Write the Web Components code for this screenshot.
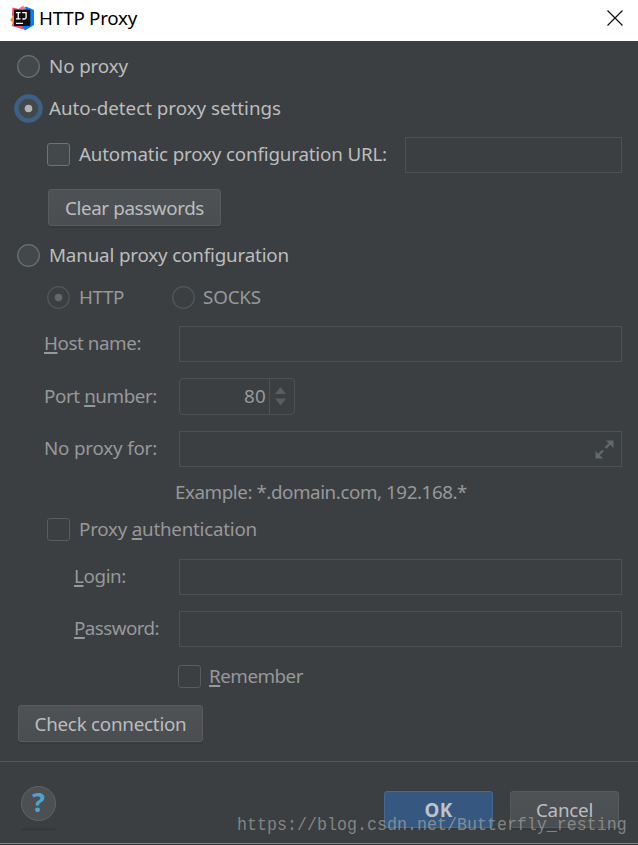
<!DOCTYPE html>
<html lang="en">
<head>
<meta charset="utf-8">
<title>HTTP Proxy</title>
<style>
html,body{margin:0;padding:0;width:638px;height:845px;overflow:hidden;background:#3c3f41}
</style>
</head>
<body>
<proxy-dialog></proxy-dialog>
<script>
function define(name, html, ready) {
  const tpl = document.createElement('template');
  tpl.innerHTML = html;
  customElements.define(name, class extends HTMLElement {
    connectedCallback() {
      if (this.shadowRoot) return;
      this.attachShadow({ mode: 'open' }).appendChild(tpl.content.cloneNode(true));
      if (ready) ready.call(this, this.shadowRoot);
    }
  });
}

/* Text label; "w" is its advance width, reached by tracking. */
define('ui-label', `<style>
:host{display:block;flex:none;white-space:pre;line-height:26px;height:26px}
:host([up]){margin-bottom:2px}
span{display:inline-block}
::slotted(u){text-decoration:underline;text-decoration-thickness:1.5px;text-underline-offset:2px;text-decoration-skip-ink:none}
</style><span><slot></slot></span>`, function (root) {
  const w = parseFloat(this.getAttribute('w'));
  if (!w) return;
  const s = root.querySelector('span');
  const n = this.textContent.length;
  s.style.letterSpacing = ((w - s.getBoundingClientRect().width) / n) + 'px';
  this.style.width = w + 'px';
});

define('ui-row', `<style>
:host{display:flex;align-items:center;box-sizing:border-box;flex:none}
:host([dim]){color:#979899}
</style><slot></slot>`, function () {
  this.style.height = this.getAttribute('h') + 'px';
  this.style.paddingLeft = (this.getAttribute('indent') || 0) + 'px';
});

define('ui-radio', `<style>
:host{display:block;flex:none;width:29px;height:29px;--edge:#6d6f70;--fill:#43494a;--dot:#b0b2b3}
:host([disabled]){--edge:#545657;--fill:#3c3f41;--dot:#656667}
svg{display:block}
.ring,.dot{display:none}
:host([focused]) .ring,:host([checked]) .dot{display:block}
:host([focused]) .edge{stroke:#3e6185}
</style><svg width="29" height="29" viewBox="0 0 29 29">
<circle class="edge" cx="14.5" cy="14.5" r="10.8" fill="var(--fill)" stroke="var(--edge)" stroke-width="1.3"/>
<circle class="ring" cx="14.5" cy="14.5" r="12.1" fill="none" stroke="#3d6185" stroke-width="4.4"/>
<circle class="dot" cx="14.5" cy="14.5" r="3.8" fill="var(--dot)"/></svg>`);

define('ui-check', `<style>
:host{display:block;flex:none;box-sizing:border-box;width:23px;height:23px;border:1px solid #707273;border-radius:3px;background:#43494a}
:host([disabled]){border-color:#5a5b5c;background:#3c3f41}
:host([up]){margin-bottom:2px}
</style>`);

define('ui-field', `<style>
:host{display:flex;flex:none;align-items:center;justify-content:flex-end;box-sizing:border-box;height:36px;border:1px solid #4f5151;padding-right:7px}
</style><slot></slot>`, function () { this.style.width = this.getAttribute('w') + 'px'; });

define('ui-spinner', `<style>
:host{display:flex;flex:none;box-sizing:border-box;width:116px;height:37px;border:1px solid #505152;border-radius:4px}
.value{flex:1;display:flex;align-items:center;justify-content:flex-end;padding-right:3px}
.arrows{width:25px;border-left:1px solid #505152;display:flex;align-items:center;padding-left:5px;box-sizing:border-box}
</style><div class="value"><slot></slot></div><div class="arrows"><svg width="11" height="20" viewBox="0 0 11 20"><path d="M0 8 5.5 1 11 8ZM0 12.5H11L5.5 19.5Z" fill="#5b5c5d"/></svg></div>`);

define('ui-button', `<style>
:host{display:flex;flex:none;align-items:center;justify-content:center;box-sizing:border-box;height:37px;border:1px solid #585b5c;border-radius:3px;background:linear-gradient(#4e5254,#4a4e50);box-shadow:0 2px 0 #37393b;color:#bbbdbe}
:host([primary]){background:#365880;border-color:#43698f;font-weight:700;color:#bfc3c8}
</style><slot></slot>`, function () { this.style.width = this.getAttribute('w') + 'px'; });

define('ui-help', `<style>
:host{display:block;flex:none;width:36px;height:46px}
.disc{box-sizing:border-box;width:35px;height:35px;border:1px solid #616365;border-radius:50%;background:#4c5052;display:flex;align-items:center;justify-content:center;font:700 27px/30px "Noto Sans",sans-serif;color:#4fa3ce}
.disc span{display:block;height:33px}
.shade{margin:7px 1px 0;height:3px;border-radius:2px;background:#37393b}
</style><div class="disc"><span>?</span></div><div class="shade"></div>`);

define('idea-logo', `<style>:host{display:block;flex:none;width:24px;height:25px;margin-top:1px}svg{display:block}</style>
<svg width="24" height="25" viewBox="0 0 24 25">
<path d="M2.5 1.5 9 3 13 0 14 12 5 16 2 9Z" fill="#f5456f"/>
<path d="M0 14 4 9 9 20 2 16Z" fill="#ff8d21"/>
<path d="M1.5 20 3 16 13 18 16 24 12 23Z" fill="#f64b78"/>
<path d="M13 3 16 .5 24 4V19L15 24.5 12 20Z" fill="#087cfa"/>
<path d="M9 2.5 13 0 16 2.5 12 6Z" fill="#e9739c"/>
<rect x="4" y="3.7" width="16.3" height="16.3" fill="#111"/>
<path d="M6 6.7h4.5M8.25 6.7v6.2M6 12.9h4.5M12.2 6.7h3.9v4.8q0 1.5-1.7 1.5h-2M6 17.3h7" fill="none" stroke="#fff" stroke-width="1.3"/>
</svg>`);

define('title-bar', `<style>
:host{display:flex;flex:none;box-sizing:border-box;height:41px;background:#fff;color:#000;padding:5px 15px 0 10px;align-items:flex-start}
ui-label{margin:0 0 0 5px}
.close{margin:5px 0 0 auto;display:block}
</style><idea-logo></idea-logo><ui-label w="98">HTTP Proxy</ui-label>
<svg class="close" width="16" height="16" viewBox="0 0 16 16"><path d="M.5.5 15.5 15.5M15.5.5.5 15.5" stroke="#111" stroke-width="1.2"/></svg>`);

define('water-mark', `<style>
:host{position:absolute;left:237px;top:813px;white-space:pre;font:16.66px/24px "Liberation Mono",monospace;color:rgba(166,168,164,.68);transform:scaleY(1.15)}
</style><slot></slot>`);

define('proxy-dialog', `<style>
:host{display:flex;flex-direction:column;position:relative;box-sizing:border-box;width:638px;height:845px;background:#3c3f41;color:#bbbdbe;font:18.8px/26px "Noto Sans","Open Sans",sans-serif}
ui-radio + ui-label{margin-left:6px}
ui-check + ui-label{margin-left:9px}
.socks{margin-left:45px}
.socks + ui-label{margin-left:5px}
.url{margin-left:18px}
.name{width:135px}
.sub{width:105px}
footer{flex:none;box-sizing:border-box;margin-top:7px;height:84px;border-top:1px solid #545657;border-bottom:1px solid #303234;display:flex;padding:24px 19px 0 21px;position:relative}
.ok{margin:5px 17px 0 auto}
.cancel{margin-top:5px}
.edge{position:absolute;left:0;right:0;bottom:0;height:1px;background:#858687}
</style>
<title-bar></title-bar>
<ui-row h="50" indent="14"><ui-radio></ui-radio><ui-label w="79">No proxy</ui-label></ui-row>
<ui-row h="34" indent="14"><ui-radio checked focused></ui-radio><ui-label w="232">Auto-detect proxy settings</ui-label></ui-row>
<ui-row h="60" indent="47"><ui-check up></ui-check><ui-label up w="308">Automatic proxy configuration URL:</ui-label><ui-field class="url" w="217"></ui-field></ui-row>
<ui-row h="45" indent="48"><ui-button w="173"><ui-label w="139">Clear passwords</ui-label></ui-button></ui-row>
<ui-row h="50" indent="14"><ui-radio></ui-radio><ui-label w="240">Manual proxy configuration</ui-label></ui-row>
<ui-row h="34" indent="44" dim><ui-radio checked disabled></ui-radio><ui-label w="45">HTTP</ui-label><ui-radio class="socks" disabled></ui-radio><ui-label w="58">SOCKS</ui-label></ui-row>
<ui-row h="60" indent="44" dim><div class="name"><ui-label up w="97"><u>H</u>ost name:</ui-label></div><ui-field w="443"></ui-field></ui-row>
<ui-row h="44" indent="44" dim><div class="name"><ui-label w="113">Port <u>n</u>umber:</ui-label></div><ui-spinner><ui-label w="22">80</ui-label></ui-spinner></ui-row>
<ui-row h="62" indent="44" dim><div class="name"><ui-label up w="113">No proxy for:</ui-label></div><ui-field w="443"><svg width="19" height="19" viewBox="0 0 19 19"><path d="M11 .5h7.5V8ZM.5 11v7.5H8Z" fill="#62696b"/><path d="M10.5 8 15 3.5M8 10.5 3.5 15" stroke="#62696b" stroke-width="2.3"/></svg></ui-field></ui-row>
<ui-row h="24" indent="175" dim><ui-label w="292">Example: *.domain.com, 192.168.*</ui-label></ui-row>
<ui-row h="50" indent="47" dim><ui-check disabled></ui-check><ui-label w="178">Proxy <u>a</u>uthentication</ui-label></ui-row>
<ui-row h="45" indent="74" dim><div class="sub"><ui-label up w="52"><u>L</u>ogin:</ui-label></div><ui-field w="443"></ui-field></ui-row>
<ui-row h="60" indent="74" dim><div class="sub"><ui-label up w="85"><u>P</u>assword:</ui-label></div><ui-field w="443"></ui-field></ui-row>
<ui-row h="34" indent="178" dim><ui-check disabled></ui-check><ui-label w="94" style="margin-left:8px"><u>R</u>emember</ui-label></ui-row>
<ui-row h="61" indent="18"><ui-button w="185"><ui-label w="152">Check connection</ui-label></ui-button></ui-row>
<footer><ui-help></ui-help><ui-button class="ok" primary w="109"><ui-label w="28">OK</ui-label></ui-button><ui-button class="cancel" w="109"><ui-label w="57">Cancel</ui-label></ui-button><div class="edge"></div></footer>
<water-mark>https://blog.csdn.net/Butterfly_resting</water-mark>`);
</script>
</body>
</html>
